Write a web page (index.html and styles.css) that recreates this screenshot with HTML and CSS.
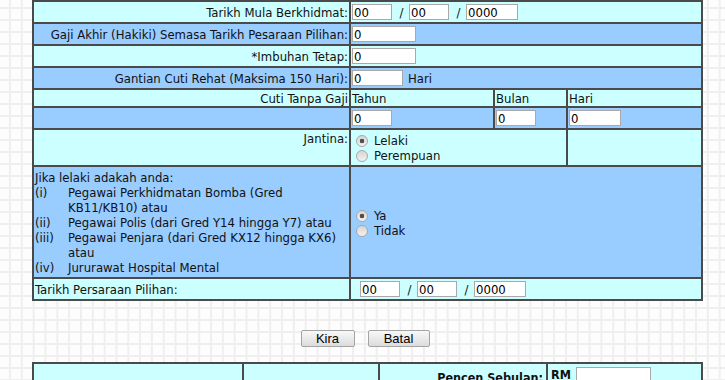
FILE: index.html
```html
<!DOCTYPE html>
<html>
<head>
<meta charset="utf-8">
<title>Kalkulator Pencen</title>
<link rel="stylesheet" href="styles.css">
</head>
<body>
<div class="form">
  <div class="c cy lbl">Tarikh Mula Berkhidmat:</div>
  <div class="c cy span3"><input class="in w40" value="00"><span class="sl">/</span><input class="in w40" value="00"><span class="sl">/</span><input class="in w52" value="0000"></div>

  <div class="c bl lbl">Gaji Akhir (Hakiki) Semasa Tarikh Pesaraan Pilihan:</div>
  <div class="c bl span3"><input class="in w64" value="0"></div>

  <div class="c cy lbl">*Imbuhan Tetap:</div>
  <div class="c cy span3"><input class="in w64" value="0"></div>

  <div class="c bl lbl">Gantian Cuti Rehat (Maksima 150 Hari):</div>
  <div class="c bl span3"><input class="in w51" value="0"><span class="unit">Hari</span></div>

  <div class="c cy lbl">Cuti Tanpa Gaji</div>
  <div class="c cy">Tahun</div>
  <div class="c cy">Bulan</div>
  <div class="c cy">Hari</div>

  <div class="c bl"></div>
  <div class="c bl"><input class="in w40" value="0"></div>
  <div class="c bl"><input class="in w40" value="0"></div>
  <div class="c bl"><input class="in w52" value="0"></div>

  <div class="c cy lbl top">Jantina:</div>
  <div class="c cy span2 top">
    <div class="radios pad">
      <label class="opt"><input type="radio" class="rd" name="jantina" checked>Lelaki</label>
      <label class="opt"><input type="radio" class="rd" name="jantina">Perempuan</label>
    </div>
  </div>
  <div class="c cy"></div>

  <div class="c bl">
    <div class="jika">
      <div>Jika lelaki adakah anda:</div>
      <div class="li"><span>(i)</span><span>Pegawai Perkhidmatan Bomba (Gred<br>KB11/KB10) atau</span></div>
      <div class="li"><span>(ii)</span><span>Pegawai Polis (dari Gred Y14 hingga Y7) atau</span></div>
      <div class="li"><span>(iii)</span><span>Pegawai Penjara (dari Gred KX12 hingga KX6)<br>atau</span></div>
      <div class="li"><span>(iv)</span><span>Jururawat Hospital Mental</span></div>
    </div>
  </div>
  <div class="c bl span3">
    <div class="radios low">
      <label class="opt"><input type="radio" class="rd" name="khas" checked>Ya</label>
      <label class="opt"><input type="radio" class="rd" name="khas">Tidak</label>
    </div>
  </div>

  <div class="c cy">Tarikh Persaraan Pilihan:</div>
  <div class="c cy span3 indent"><input class="in w40" value="00"><span class="sl">/</span><input class="in w40" value="00"><span class="sl">/</span><input class="in w52" value="0000"></div>
</div>

<div class="actions">
  <button class="btn kira" type="button">Kira</button>
  <button class="btn batal" type="button">Batal</button>
</div>

<div class="result">
  <div class="c cy rc"></div>
  <div class="c cy rc"></div>
  <div class="c cy rc lbl bold pr">Pencen Sebulan:</div>
  <div class="c cy rc rm"><span class="bold">RM</span><input class="in w75" value=""></div>
</div>
</body>
</html>
```

FILE: styles.css
```css
* {
  box-sizing: border-box;
}

html,
body {
  margin: 0;
}

body {
  font-family: "DejaVu Sans Condensed", "DejaVu Sans", sans-serif;
  font-stretch: condensed;
  font-size: 13px;
  color: #111;
  background-color: #fdfdfd;
  background-image:
    linear-gradient(to right, #efefef 2px, transparent 2px),
    linear-gradient(to bottom, #efefef 2px, transparent 2px);
  background-size: 11.83px 12px;
  background-position: 9px 7px;
  min-height: 380px;
}

.form {
  display: grid;
  grid-template-columns: 317px 144px 73px 135px;
  grid-template-rows: 22px 22px 22px 22px 18px 22px 37px 112px 22px;
  width: 671px;
  margin-left: 32px;
  border: 1px solid #4a4a4a;
}

.c {
  border: 1px solid #4a4a4a;
  padding: 0 1px;
  display: flex;
  align-items: center;
  line-height: 15px;
  white-space: nowrap;
}

.cy {
  background: #ccffff;
}

.bl {
  background: #99ccff;
}

.lbl {
  justify-content: flex-end;
}

.top {
  align-items: flex-start;
  padding-top: 1px;
}

.span2 {
  grid-column: span 2;
}

.span3 {
  grid-column: span 3;
}

.in {
  height: 16px;
  margin: 0;
  padding: 0 1px;
  border: 1px solid #a9a9a9;
  background: #fff;
  font: inherit;
  color: #000;
}

.w40 { width: 40px; }
.w51 { width: 51px; }
.w52 { width: 52px; }
.w64 { width: 64px; }
.w75 { width: 75px; }

.sl {
  width: 17px;
  padding-left: 2px;
  text-align: center;
}

.unit {
  margin-left: 5px;
}

.indent {
  padding-left: 9px;
}

.radios {
  display: flex;
  flex-direction: column;
}

.radios.pad {
  padding-top: 2px;
}

.radios.low {
  padding-top: 2px;
}

.opt {
  display: flex;
  align-items: center;
  height: 15px;
}

.rd {
  appearance: none;
  -webkit-appearance: none;
  width: 12px;
  height: 12px;
  margin: 0 6px 0 4px;
  border: 1px solid #a8a8a8;
  border-radius: 50%;
  background: linear-gradient(#d6d6d6, #f2f2f2);
}

.rd:checked {
  background:
    radial-gradient(circle, #4f4f4f 0 2px, transparent 2.6px),
    linear-gradient(#d6d6d6, #f2f2f2);
}

.jika {
  display: flex;
  flex-direction: column;
}

.li {
  display: grid;
  grid-template-columns: 33px auto;
}

.actions {
  display: flex;
  justify-content: center;
  gap: 13px;
  width: 671px;
  margin: 29px 0 15px 32px;
  padding-right: 5px;
  height: 17px;
}

.btn {
  height: 17px;
  padding: 0;
  border: 1px solid #a4a4a4;
  border-radius: 2px;
  background: linear-gradient(#f8f8f8, #dcdcdc);
  font-family: "Liberation Sans", Arial, sans-serif;
  font-size: 13px;
  line-height: 15px;
  color: #000;
}

.kira { width: 54px; }
.batal { width: 62px; }

.result {
  display: grid;
  grid-template-columns: 210px 136px 168px 155px;
  grid-template-rows: 28px;
  width: 671px;
  margin-left: 32px;
  border: 1px solid #4a4a4a;
}

.bold {
  font-weight: bold;
  font-size: 12.5px;
}

.pr {
  padding-right: 3px;
}

.rm {
  align-items: flex-start;
  padding-top: 3px;
  gap: 5px;
  padding-left: 3px;
}
```
